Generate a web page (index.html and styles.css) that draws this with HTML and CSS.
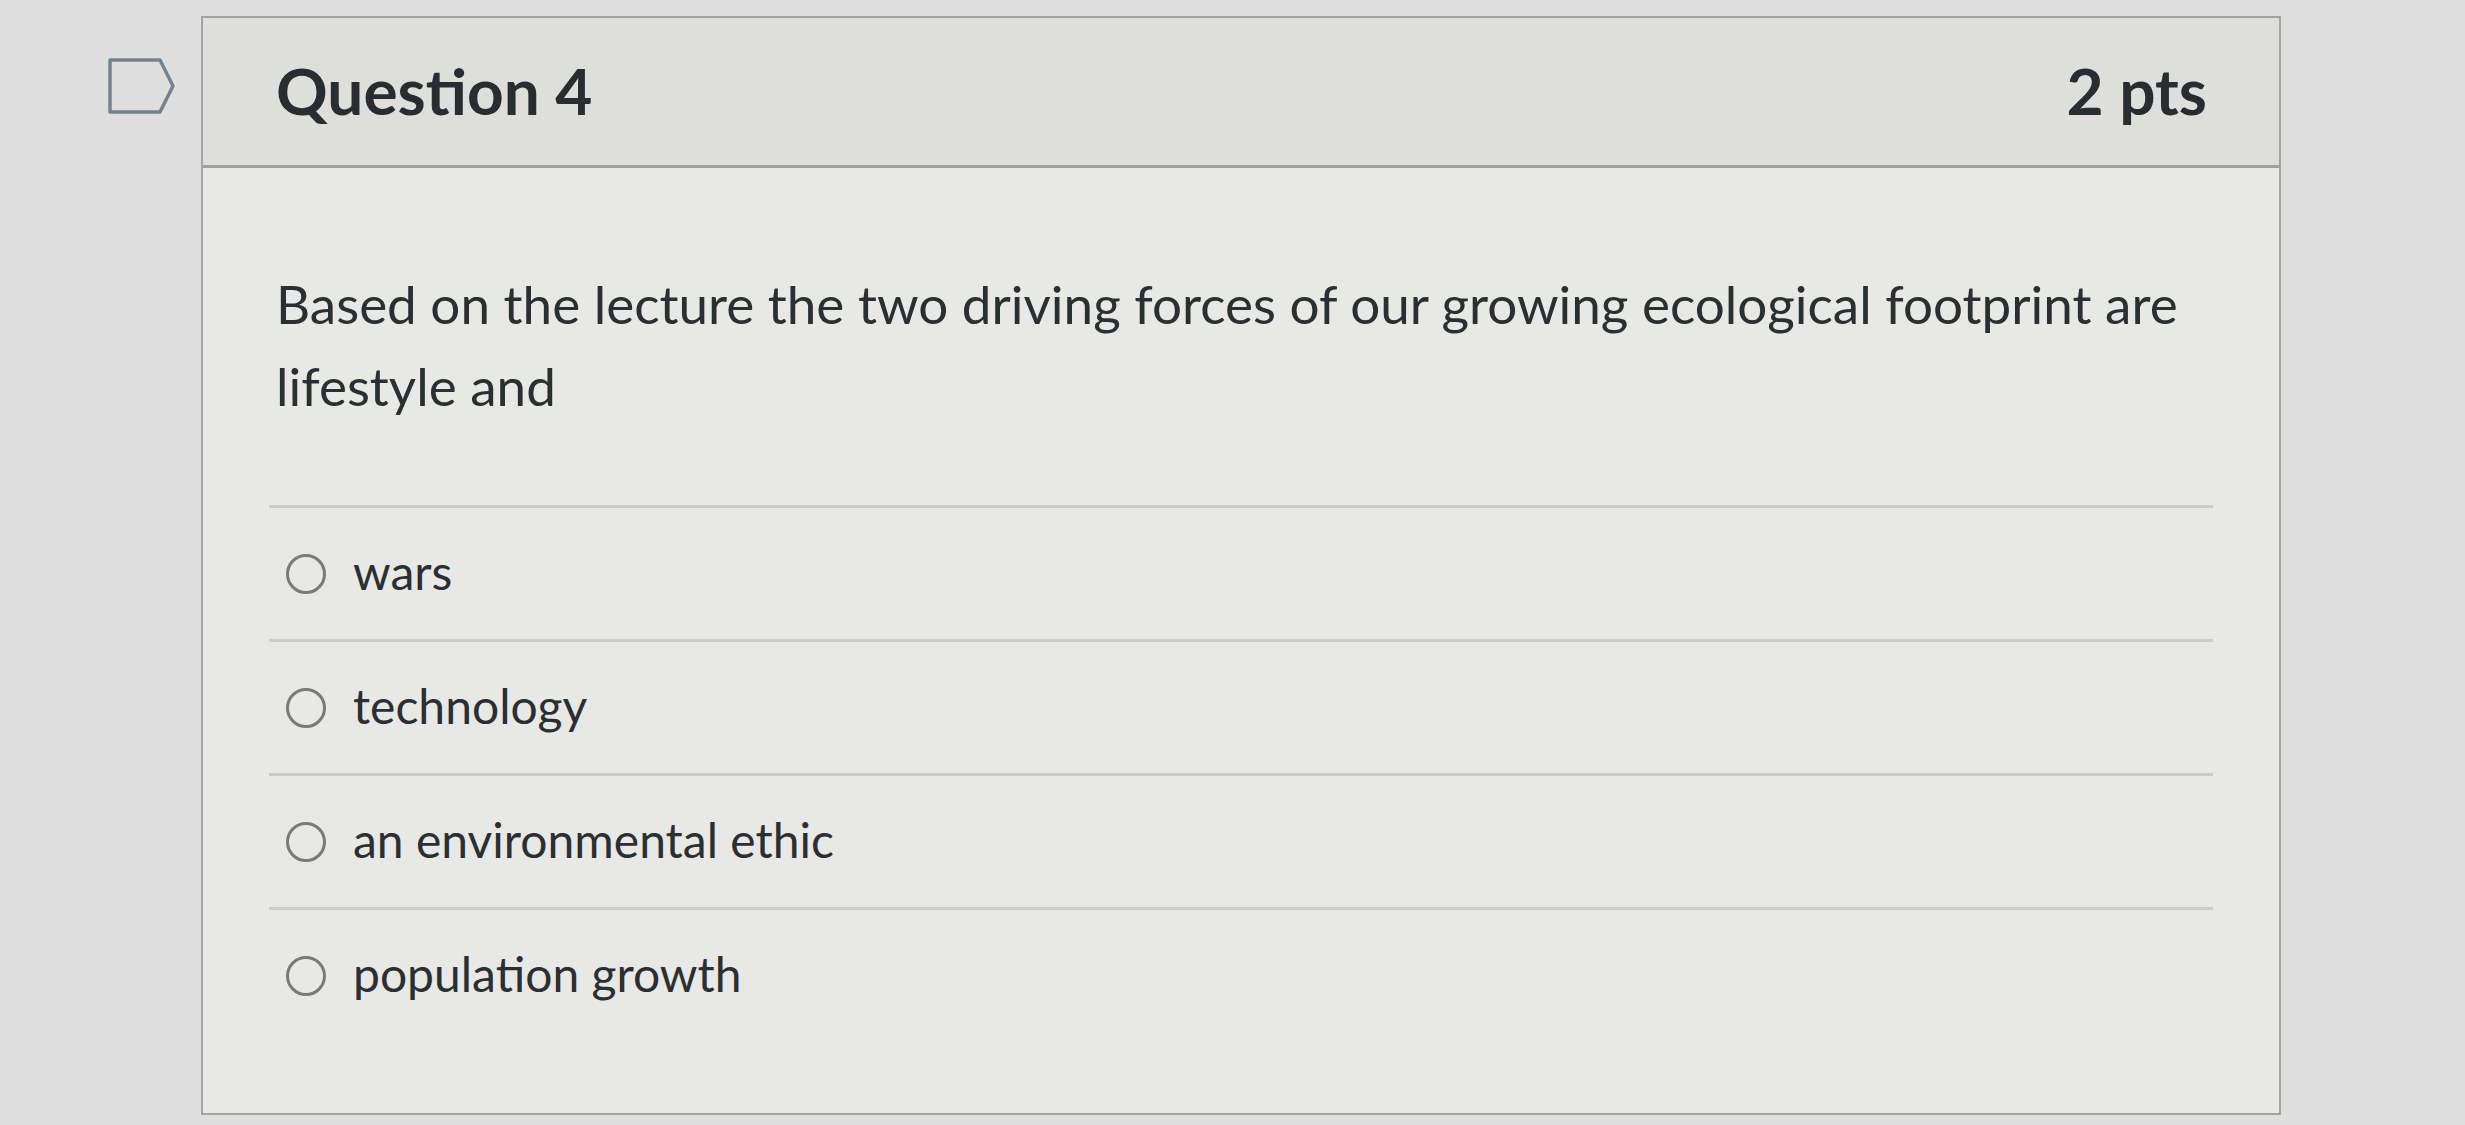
FILE: index.html
```html
<!DOCTYPE html>
<html lang="en">
<head>
<meta charset="utf-8">
<title>Question 4</title>
<link rel="stylesheet" href="styles.css">
</head>
<body>
<div class="page">
  <div class="flag-col">
    <svg class="flag" width="68" height="56" viewBox="0 0 68 56" aria-hidden="true">
      <path d="M2 2 H52 L65 28 L52 54 H2 Z" fill="none" stroke="#78828f" stroke-width="3.5" stroke-linejoin="round"/>
    </svg>
  </div>
  <div class="card">
    <div class="card-header">
      <span class="q-title">Question 4</span>
      <span class="q-pts">2 pts</span>
    </div>
    <div class="card-body">
      <p class="q-text">Based on the lecture the two driving forces of our growing ecological footprint are lifestyle and</p>
      <ul class="answers">
        <li class="answer"><span class="radio"></span><span class="a-text">wars</span></li>
        <li class="answer"><span class="radio"></span><span class="a-text">technology</span></li>
        <li class="answer"><span class="radio"></span><span class="a-text">an environmental ethic</span></li>
        <li class="answer"><span class="radio"></span><span class="a-text">population growth</span></li>
      </ul>
    </div>
  </div>
</div>
</body>
</html>
```
FILE: styles.css
```css
html, body {
  margin: 0;
  padding: 0;
}
body {
  background: #dfdfdf;
  font-family: Lato, "Liberation Sans", sans-serif;
  color: #2a2d30;
  width: 2465px;
  height: 1125px;
  overflow: hidden;
}
.page {
  display: flex;
  align-items: flex-start;
  padding: 16px 0 0 108px;
}
.flag-col {
  width: 68px;
  margin-right: 25px;
  padding-top: 42px;
}
.flag {
  display: block;
}
.card {
  width: 2080px;
  height: 1099px;
  box-sizing: border-box;
  border: 2px solid #a3a3a3;
  background: #e8e8e6;
  display: flex;
  flex-direction: column;
}
.card-header {
  height: 150px;
  box-sizing: border-box;
  background: #dededc;
  border-bottom: 3px solid #a0a0a0;
  display: flex;
  align-items: center;
  justify-content: space-between;
  padding: 0 72px 2px 73px;
}
.q-title, .q-pts {
  font-weight: 700;
  font-size: 64px;
  color: #2a2d30;
}
.card-body {
  padding: 95px 66px 0 66px;
}
.q-text {
  margin: 0 0 78px 0;
  padding-left: 7px;
  font-size: 53px;
  line-height: 82px;
  color: #2c2f32;
}
.answers {
  list-style: none;
  margin: 0;
  padding: 0;
}
.answer {
  height: 134px;
  box-sizing: border-box;
  border-top: 3px solid #cbcbca;
  display: flex;
  align-items: center;
  padding-left: 17px;
}
.radio {
  width: 34px;
  height: 34px;
  border: 3.5px solid #7a7a7a;
  border-radius: 50%;
  flex: none;
  margin-right: 27px;
}
.a-text {
  font-size: 48px;
  color: #2c2f32;
  padding-bottom: 4px;
}
```
